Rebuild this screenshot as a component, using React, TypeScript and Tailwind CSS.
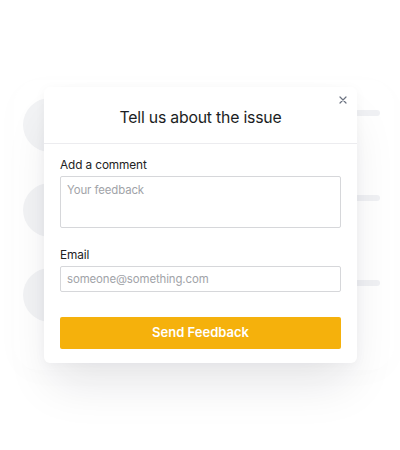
import React from 'react';

function SkeletonRow() {
  return (
    <div className="flex items-start gap-4">
      <div className="w-[54px] h-[54px] rounded-full bg-[#f2f3f5] shrink-0" />
      <div className="flex-1 flex flex-col gap-3 pt-3">
        <div className="h-[6px] rounded-full bg-[#f0f1f4]" />
        <div className="h-[6px] w-3/4 rounded-full bg-[#f3f4f6]" />
      </div>
    </div>
  );
}

export default function App() {
  return (
    <div
      className="relative w-[400px] h-[450px] overflow-hidden bg-white"
      style={{ fontFamily: 'Inter, "Noto Sans", sans-serif' }}
    >
      {/* faint list behind the dialog */}
      <div className="absolute left-[14px] top-[80px] w-[380px] h-[290px] rounded-[24px] bg-white shadow-[0_6px_30px_rgba(15,23,42,0.015)] pl-[9px] pr-[14px] pt-[18px] flex flex-col gap-[31px]">
        <SkeletonRow />
        <SkeletonRow />
        <SkeletonRow />
      </div>

      {/* dialog */}
      <div className="absolute left-[44px] top-[87px] w-[313px] rounded-[6px] bg-white shadow-[0_28px_44px_-8px_rgba(15,23,42,0.10),0_2px_12px_rgba(15,23,42,0.04)]">
        <div className="relative h-[57px] flex items-center justify-center border-b border-[#ececef]">
          <h2 className="text-[15.8px] font-normal text-[#1b1e23] tracking-[-0.2px] mt-[6px]">Tell us about the issue</h2>
          <button className="absolute right-[8px] top-[7px] w-[12px] h-[12px] flex items-center justify-center text-[#6b7280]">
            <svg width="8" height="8" viewBox="0 0 8 8" fill="none" stroke="currentColor" strokeWidth="1.2" strokeLinecap="round">
              <path d="M1 1l6 6M7 1L1 7" />
            </svg>
          </button>
        </div>
        <div className="px-[16px] pt-[13px] pb-[14px] flex flex-col">
          <label className="text-[11.8px] text-[#222] leading-[16px] tracking-[-0.1px]">Add a comment</label>
          <textarea
            placeholder="Your feedback"
            className="mt-[3px] h-[52px] w-full resize-none border border-[#d6d7da] rounded-[2px] px-[6px] py-[5px] text-[11.4px] leading-[16px] tracking-[-0.1px] text-[#222] placeholder:text-[#a1a3a8] outline-none"
          />
          <label className="mt-[19px] text-[11.8px] text-[#222] leading-[16px] tracking-[-0.1px]">Email</label>
          <input
            placeholder="someone@something.com"
            className="mt-[3px] h-[26px] w-full border border-[#d6d7da] rounded-[2px] px-[6px] text-[11.4px] tracking-[-0.1px] text-[#222] placeholder:text-[#a1a3a8] outline-none"
          />
          <button className="mt-[25px] h-[32px] w-full rounded-[2px] bg-[#f5b10c] text-white text-[13px] font-semibold">
            Send Feedback
          </button>
        </div>
      </div>
    </div>
  );
}
